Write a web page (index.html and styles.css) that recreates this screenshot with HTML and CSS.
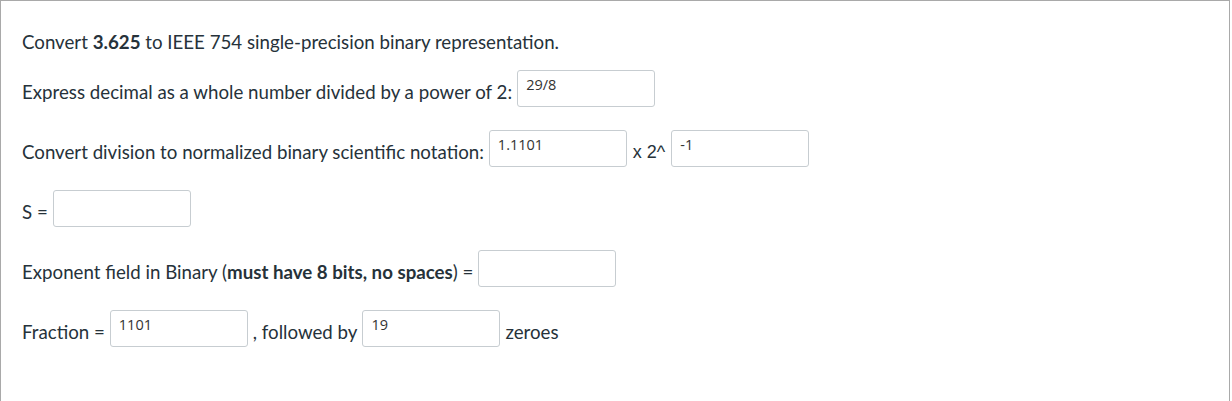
FILE: index.html
```html
<!DOCTYPE html>
<html lang="en">
<head>
    <meta charset="UTF-8">
    <meta name="viewport" content="width=device-width, initial-scale=1.0">
    <title>IEEE 754 Conversion</title>
    <link rel="stylesheet" href="styles.css">
</head>
<body>
    <div class="question">
        <div class="intro">Convert <b>3.625</b> to IEEE 754 single-precision binary representation.</div>

        <div class="row">
            <span class="label">Express decimal as a whole number divided by a power of 2:</span>
            <input type="text" class="answer" value="29/8">
        </div>

        <div class="row">
            <span class="label">Convert division to normalized binary scientific notation:</span>
            <input type="text" class="answer" value="1.1101">
            <span class="label plain">x 2^</span>
            <input type="text" class="answer" value="-1">
        </div>

        <div class="row">
            <span class="label">S =</span>
            <input type="text" class="answer" value="">
        </div>

        <div class="row">
            <span class="label">Exponent field in Binary (<b>must have 8 bits, no spaces</b>) =</span>
            <input type="text" class="answer" value="">
        </div>

        <div class="row">
            <span class="label">Fraction =</span>
            <input type="text" class="answer" value="1101">
            <span class="label">, followed by</span>
            <input type="text" class="answer" value="19">
            <span class="label">zeroes</span>
        </div>
    </div>
</body>
</html>
```

FILE: styles.css
```css
body {
    margin: 0;
    background: #ffffff;
    font-family: Lato, "Liberation Sans", sans-serif;
    color: #26323a;
}
.question {
    width: 1230px;
    height: 420px;
    box-sizing: border-box;
    border: 1px solid #a9a9a9;
    padding: 30px 20px 0 21px;
}
.intro {
    font-size: 18.7px;
    line-height: 22px;
    margin-bottom: 17px;
}
.intro b {
    font-weight: bold;
}
.row {
    display: flex;
    align-items: flex-end;
    gap: 5px;
    margin-bottom: 23px;
}
.label {
    font-size: 18.7px;
    line-height: 22px;
    padding-bottom: 4px;
    white-space: nowrap;
}
.label b {
    font-weight: bold;
}
.label.plain {
    font-family: "Liberation Sans", Arial, sans-serif;
    font-size: 18px;
    margin: 0 1px 0 1px;
}
.answer {
    width: 138px;
    height: 37px;
    box-sizing: border-box;
    margin: 0;
    padding: 0 8px 9px 8px;
    border: 1px solid #c7cdd1;
    border-radius: 3px;
    font-family: "Open Sans", "DejaVu Sans", sans-serif;
    font-size: 14.5px;
    color: #333333;
    background: #ffffff;
}
```
